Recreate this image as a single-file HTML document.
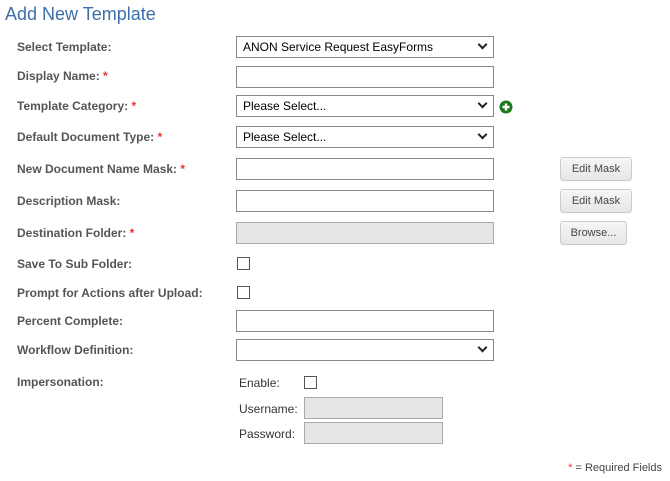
<!DOCTYPE html>
<html><head><style>
body{margin:0;width:670px;height:481px;background:#fff;font-family:"Liberation Sans",sans-serif;position:relative;overflow:hidden}
.a{position:absolute}
h1{position:absolute;left:5px;top:4px;margin:0;font-weight:normal;font-size:18px;color:#3c6fa8}
.l{position:absolute;left:17px;font-size:12px;font-weight:bold;color:#555}
.r{color:#e33}
.i{position:absolute;left:236px;width:256px;height:20px;border:1px solid #888;background:#fff;font-size:12px;line-height:20px;color:#000}
.i span{padding-left:6px}
.chev{position:absolute;right:7px;top:4px;width:5px;height:5px;border-right:2px solid #222;border-bottom:2px solid #222;transform:rotate(45deg)}
.cb{position:absolute;width:11px;height:11px;border:1px solid #555;background:#fff}
.b{position:absolute;left:560px;height:22px;border:1px solid #ccc;border-radius:3px;background:linear-gradient(#f6f6f6,#e6e6e6);font-size:11px;color:#444;text-align:center;line-height:22px}
.s{position:absolute;font-size:12px;color:#333}
.g{position:absolute;left:304px;width:137px;height:20px;border:1px solid #aaa;background:#e6e6e6}
</style></head><body>
<h1>Add New Template</h1>
<div class="l" style="top:40px">Select Template:</div>
<div class="l" style="top:69px">Display Name: <span class="r">*</span></div>
<div class="l" style="top:99px">Template Category: <span class="r">*</span></div>
<div class="l" style="top:130px">Default Document Type: <span class="r">*</span></div>
<div class="l" style="top:162px">New Document Name Mask: <span class="r">*</span></div>
<div class="l" style="top:194px">Description Mask:</div>
<div class="l" style="top:226px">Destination Folder: <span class="r">*</span></div>
<div class="l" style="top:257px">Save To Sub Folder:</div>
<div class="l" style="top:286px">Prompt for Actions after Upload:</div>
<div class="l" style="top:314px">Percent Complete:</div>
<div class="l" style="top:343px">Workflow Definition:</div>
<div class="l" style="top:375px">Impersonation:</div>

<div class="i" style="top:36px"><span>ANON Service Request EasyForms</span><div class="chev"></div></div>
<div class="i" style="top:66px"></div>
<div class="i" style="top:95px"><span>Please Select...</span><div class="chev"></div></div>
<div class="i" style="top:126px"><span>Please Select...</span><div class="chev"></div></div>
<div class="i" style="top:158px"></div>
<div class="i" style="top:190px"></div>
<div class="i" style="top:222px;background:#e6e6e6;border-color:#aaa"></div>
<div class="cb" style="left:237px;top:257px"></div>
<div class="cb" style="left:237px;top:286px"></div>
<div class="i" style="top:310px"></div>
<div class="i" style="top:339px"><div class="chev"></div></div>

<svg class="a" style="left:499px;top:100px" width="14" height="14" viewBox="0 0 14 14"><circle cx="7" cy="7" r="6.5" fill="#1a7a1a"/><path d="M7 3.5v7M3.5 7h7" stroke="#fff" stroke-width="2.4"/></svg>

<div class="b" style="top:157px;width:70px">Edit Mask</div>
<div class="b" style="top:189px;width:70px">Edit Mask</div>
<div class="b" style="top:221px;width:65px">Browse...</div>

<div class="s" style="left:239px;top:376px">Enable:</div>
<div class="cb" style="left:304px;top:376px"></div>
<div class="s" style="left:239px;top:402px">Username:</div>
<div class="g" style="top:397px"></div>
<div class="s" style="left:239px;top:427px">Password:</div>
<div class="g" style="top:422px"></div>

<div class="s" style="right:8px;top:462px;font-size:11px;color:#444"><span class="r">*</span> = Required Fields</div>
</body></html>
